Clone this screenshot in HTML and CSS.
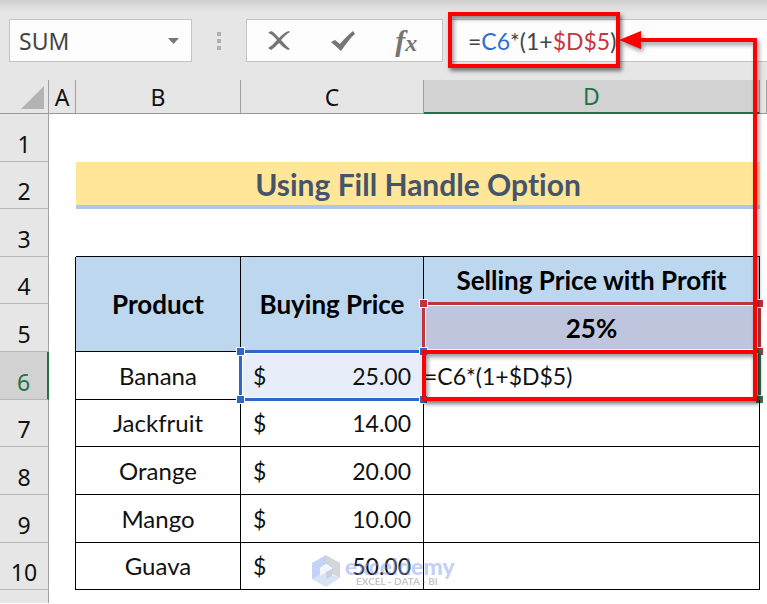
FILE: index.html
```html
<!DOCTYPE html>
<html lang="en">
<head>
    <meta charset="UTF-8">
    <meta name="viewport" content="width=device-width, initial-scale=1.0">
    <title>Using Fill Handle Option</title>
    <link rel="stylesheet" href="styles.css">
</head>
<body>
    <header class="toolbar">
        <div class="name-box">
            <input type="text" value="SUM" aria-label="Name box">
            <button type="button" aria-label="Open name list"><svg width="11" height="6" viewBox="0 0 11 6"><path d="M0 0h11L5.500 6z" fill="#777"/></svg></button>
        </div>
        <div class="dots"><span></span><span></span><span></span></div>
        <div class="actions">
            <button type="button" aria-label="Cancel">
                <svg width="24" height="22" viewBox="0 0 24 22"><path d="M1 3l3-2c3 1 5 4 8 7 3-3 6-6 10-7l1 1c-4 2-6 5-9 8 3 3 5 6 9 9l-2 1c-4-2-6-4-9-7-3 3-5 5-8 7l-3-2c4-2 6-5 9-8C7 7 5 4 1 3z" fill="#757575"/></svg>
            </button>
            <button type="button" aria-label="Enter">
                <svg width="26" height="22" viewBox="0 0 26 22"><path d="M1 12l4-2 5 4C14 9 18 5 23 1l2 3c-5 4-9 10-14 17z" fill="#757575"/></svg>
            </button>
            <button type="button" class="fx" aria-label="Insert function"><span>f</span><small>x</small></button>
        </div>
        <div class="formula">
            <div class="formula-text" role="textbox" aria-label="Formula bar" contenteditable="true" spellcheck="false">=<span class="ref-blue">C6</span>*(1+<span class="ref-red">$D$5</span>)</div>
            <div class="mark formula-mark"></div>
        </div>
    </header>

    <table class="sheet">
        <colgroup>
            <col class="col-num"><col class="col-a"><col class="col-b"><col class="col-c"><col><col class="col-rest">
        </colgroup>
        <thead>
            <tr>
                <th class="corner"><svg width="23" height="23" viewBox="0 0 23 23"><path d="M23 0v23H0z" fill="#b3b3b3"/></svg></th>
                <th>A</th>
                <th>B</th>
                <th>C</th>
                <th class="active">D</th>
                <th></th>
            </tr>
        </thead>
        <tbody>
            <tr><th>1</th><td></td><td></td><td></td><td></td><td></td></tr>
            <tr class="short"><th>2</th><td></td><td class="title" colspan="3">Using Fill Handle Option</td><td></td></tr>
            <tr class="above"><th>3</th><td></td><td></td><td></td><td></td><td></td></tr>
            <tr class="short">
                <th>4</th><td class="edge"></td>
                <td class="cell head" rowspan="2">Product</td>
                <td class="cell head" rowspan="2">Buying Price</td>
                <td class="cell head">Selling Price with Profit</td>
                <td></td>
            </tr>
            <tr>
                <th>5</th><td class="edge"></td>
                <td class="cell head rate">25%<div class="range range-red"><i></i><i></i><i></i><i></i></div></td>
                <td></td>
            </tr>
            <tr>
                <th class="active">6</th><td class="edge"></td>
                <td class="cell name">Banana</td>
                <td class="cell picked"><div class="money"><span>$</span><span>25.00</span></div><div class="range range-blue"><i></i><i></i><i></i><i></i></div></td>
                <td class="cell editing">=C6*(1+$D$5)<div class="range range-green"><i></i></div><div class="mark cell-mark"></div></td>
                <td></td>
            </tr>
            <tr class="short">
                <th>7</th><td class="edge"></td>
                <td class="cell name">Jackfruit</td>
                <td class="cell"><div class="money"><span>$</span><span>14.00</span></div></td>
                <td class="cell"></td><td></td>
            </tr>
            <tr>
                <th>8</th><td class="edge"></td>
                <td class="cell name">Orange</td>
                <td class="cell"><div class="money"><span>$</span><span>20.00</span></div></td>
                <td class="cell"></td><td></td>
            </tr>
            <tr>
                <th>9</th><td class="edge"></td>
                <td class="cell name">Mango</td>
                <td class="cell"><div class="money"><span>$</span><span>10.00</span></div></td>
                <td class="cell"></td><td></td>
            </tr>
            <tr class="short">
                <th>10</th><td class="edge"></td>
                <td class="cell name">Guava</td>
                <td class="cell">
                    <div class="money"><span>$</span><span>50.00</span></div>
                    <div class="watermark">
                        <svg width="28" height="32" viewBox="0 0 28 32">
                            <path d="M14 0L0 8v16l8 4V13l6-4z" fill="#7f9df0"/>
                            <path d="M14 0l14 8v15l-8-4v-6l-6-4z" fill="#a0a6ae"/>
                            <path d="M0 24l14-7 6 3 8 3-14 9z" fill="#a9c4e8"/>
                            <path d="M14 10l6 4v7l-6-4-6 4v-7z" fill="#e4ebf7"/>
                            <path d="M14 17l6-3v7l-6 3z" fill="#8b9bb5"/>
                        </svg>
                        <div><b>exceldemy</b><small>EXCEL - DATA - BI</small></div>
                    </div>
                </td>
                <td class="cell"></td><td></td>
            </tr>
            <tr class="last"><th></th><td></td><td></td><td></td><td></td><td></td></tr>
        </tbody>
    </table>

    <div class="arrow"><svg width="22" height="18" viewBox="0 0 22 18"><path d="M0 9L22 0v18z" fill="#f00"/></svg></div>
</body>
</html>
```

FILE: styles.css
```css
* {
    box-sizing: border-box;
}

body {
    position: relative;
    min-height: 100vh;
    margin: 0;
    background-color: white;
    color: #111;
    font-family: Lato, sans-serif;
    font-size: 23px;
    font-variant-ligatures: none;
}

button {
    padding: 0;
    border: 0;
    background: none;
}

/* formula bar */
.toolbar {
    display: flex;
    height: 80px;
    padding: 19px 0 18px 9px;
    background: linear-gradient(#cfcfcf, #e6e6e6 12px);
}

.name-box,
.actions,
.formula {
    display: flex;
    align-items: center;
    background-color: #fdfdfd;
    border: 1px solid #c3c3c3;
}

.name-box {
    width: 183px;
    padding: 0 12px 0 9px;
}

.name-box input {
    flex: 1;
    min-width: 0;
    padding: 0;
    border: 0;
    background: none;
    color: #444;
    font: 23px "Noto Sans", sans-serif;
}

.name-box button,
.actions button {
    display: flex;
    align-items: center;
    justify-content: center;
}

.dots {
    display: flex;
    flex-direction: column;
    align-items: center;
    justify-content: center;
    gap: 3px;
    width: 54px;
}

.dots span {
    width: 4px;
    height: 4px;
    background-color: #b0b0b0;
}

.actions {
    width: 197px;
    padding-right: 4px;
}

.actions button {
    flex: 1;
}

.actions .fx {
    align-items: baseline;
    color: #757575;
    font: italic bold 30px "Liberation Serif", serif;
}

.fx small {
    font-size: 24px;
}

.formula {
    position: relative;
    flex: 1;
    margin-left: 6px;
    padding-left: 18px;
    border-right: 0;
}

.formula-text {
    color: #444;
    outline: 0;
    white-space: nowrap;
}

.ref-blue {
    color: #2f6fd0;
}

.ref-red {
    color: #c5363f;
}

/* grid */
.sheet {
    width: 100%;
    table-layout: fixed;
    border-collapse: separate;
    border-spacing: 0;
}

.col-num { width: 49px; }
.col-a { width: 27px; }
.col-b { width: 165px; }
.col-c { width: 183px; }
.col-rest { width: 7px; }

.sheet th,
.sheet td {
    height: 48px;
    padding: 0;
    line-height: 28px;
}

.sheet .short th,
.sheet .short td {
    height: 47px;
}

.sheet .last th,
.sheet .last td {
    height: 13px;
    padding: 0;
    border-bottom: 0;
}

.sheet th {
    background-color: #e6e6e6;
    border-right: 1px solid #a0a0a0;
    border-bottom: 1px solid #b8b8b8;
    font-family: "Noto Sans", sans-serif;
    font-weight: normal;
}

.sheet thead th {
    height: 34px;
    border-bottom-color: #999;
}

.sheet thead .active {
    background-color: #d2d2d2;
    border-bottom: 2px solid #217346;
    color: #217346;
}

.sheet .corner {
    padding: 0 4px 4px 0;
    vertical-align: bottom;
}

.corner svg {
    display: block;
    margin-left: auto;
}

.sheet tbody th {
    padding-bottom: 3px;
    vertical-align: bottom;
}

.sheet tbody .active {
    background-color: #d2d2d2;
    border-right: 2px solid #217346;
    color: #217346;
}

.sheet .title {
    background-color: #ffe699;
    border-bottom: 4px solid #a9c9ea;
    color: #44546a;
    font-size: 30px;
    font-weight: bold;
    text-align: center;
}

.above td:nth-child(n+3):nth-child(-n+5) {
    border-bottom: 1px solid black;
}

.edge {
    border-right: 1px solid black;
}

.cell {
    position: relative;
    border-right: 1px solid black;
    border-bottom: 1px solid black;
    text-align: center;
}

.head {
    background-color: #bdd7ee;
    color: black;
    font-size: 26px;
    font-weight: bold;
}

.rate {
    background-color: #bfc5dc;
}

.name {
    font-size: 24px;
}

.picked {
    background-color: #e8eef9;
}

.editing {
    text-align: left;
}

.money {
    display: flex;
    justify-content: space-between;
    padding: 0 12px;
}

/* coloured outlines of the referenced cells */
.range {
    position: absolute;
    inset: -2px;
    border: 3px solid;
    box-shadow: inset 0 0 0 1px white;
}

.range i {
    position: absolute;
    width: 9px;
    height: 9px;
    background-color: currentColor;
    border: 1px solid white;
}

.range i:nth-child(1) { top: -6px; left: -6px; }
.range i:nth-child(2) { top: -6px; right: -6px; }
.range i:nth-child(3) { bottom: -6px; left: -6px; }
.range i:nth-child(4) { bottom: -6px; right: -6px; }

.range-blue {
    z-index: 1;
    color: #2f67c8;
}

.range-red {
    color: #c0343e;
}

.range-green {
    color: #3d7555;
}

.range-green i:nth-child(1) {
    top: auto;
    right: -6px;
    bottom: -6px;
    left: auto;
}

/* red callouts */
.mark {
    position: absolute;
    z-index: 2;
    border: 4px solid red;
    box-shadow: 2px 3px 4px rgba(0, 0, 0, 0.5), inset 2px 3px 4px rgba(0, 0, 0, 0.4);
}

.formula-mark {
    top: -8px;
    left: -2px;
    width: 172px;
    height: 56px;
}

.cell-mark {
    inset: -2px 2px -2px -2px;
}

.arrow {
    position: absolute;
    z-index: 3;
    top: 38px;
    right: 10px;
    left: 640px;
    height: 360px;
    border-top: 4px solid red;
    border-right: 4px solid red;
    filter: drop-shadow(2px 3px 2px rgba(0, 0, 0, 0.4));
}

.arrow svg {
    position: absolute;
    top: -11px;
    left: -21px;
}

.watermark {
    position: absolute;
    z-index: 1;
    top: 12px;
    left: 71px;
    display: flex;
    gap: 5px;
    opacity: 0.45;
    color: #7b97ee;
    text-align: left;
}

.watermark b,
.watermark small {
    display: block;
}

.watermark b {
    font-size: 23px;
    font-weight: 900;
    line-height: 22px;
}

.watermark small {
    padding-left: 11px;
    color: #777f8c;
    font-size: 10px;
    font-weight: bold;
    line-height: 9px;
    white-space: nowrap;
}
```
